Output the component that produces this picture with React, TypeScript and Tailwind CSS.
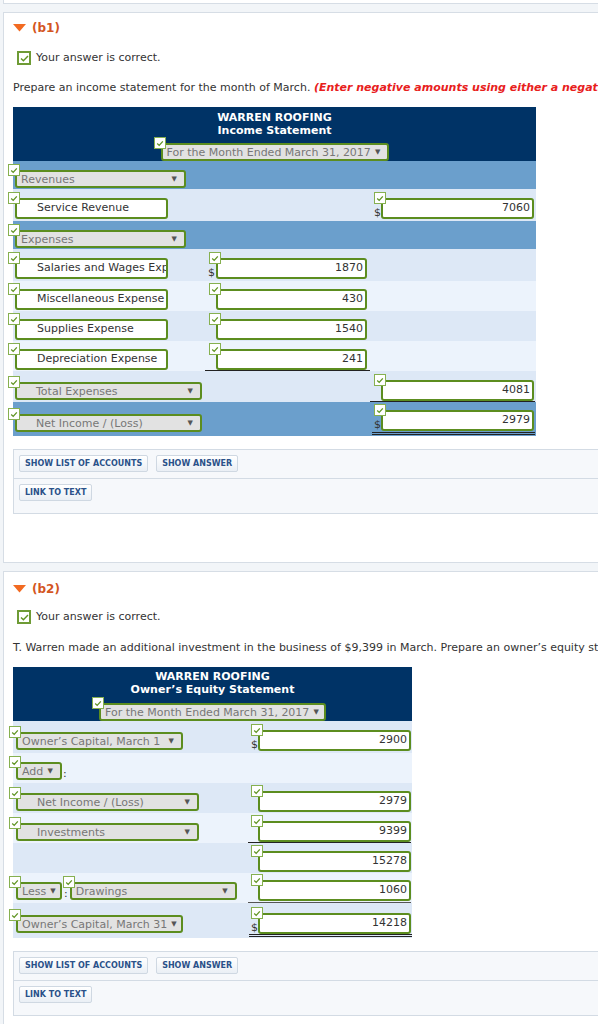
import React from "react";

function Chk() {
  return (
    <span className="absolute left-[-7px] top-[-6px] z-10 flex h-[12px] w-[12px] items-center justify-center border border-[#86b050] bg-white">
      <svg width="8" height="7" viewBox="0 0 8 7">
        <path d="M1.2 3.6 L3.2 5.4 L6.8 1.4" fill="none" stroke="#5f9422" strokeWidth="1.3" />
      </svg>
    </span>
  );
}

function BigChk() {
  return (
    <span className="flex h-[14px] w-[14px] items-center justify-center border-2 border-[#6e9b35] bg-white">
      <svg width="9" height="7" viewBox="0 0 9 7">
        <path d="M1 3.5 L3.4 5.8 L8 1" fill="none" stroke="#5f9422" strokeWidth="1.4" />
      </svg>
    </span>
  );
}

function TextBox({ w, children, right }: { w: string; children: React.ReactNode; right?: boolean }) {
  return (
    <div className={`relative shrink-0 ${w}`}>
      <Chk />
      <div
        className={`flex h-[21px] items-center overflow-hidden whitespace-nowrap rounded-[3px] border-2 border-[#5c8d1f] bg-white text-[11px] font-normal text-[#333] ${
          right ? "justify-end pr-[2px]" : "pl-[20px]"
        }`}
      >
        {children}
      </div>
    </div>
  );
}

function Select({ w, label, pl }: { w: string; label: string; pl: string }) {
  return (
    <div className={`relative shrink-0 ${w}`}>
      <Chk />
      <div
        className={`flex h-[18px] items-center justify-between gap-[4px] overflow-hidden whitespace-nowrap rounded-[3px] border-2 border-[#5c8d1f] bg-[#e2e2e2] ${pl} pr-[7px] text-[11px] font-normal leading-none text-[#777]`}
      >
        <span>{label}</span>
        <span className="text-[7px] text-[#555]">▼</span>
      </div>
    </div>
  );
}

function Dollar({ show, w }: { show?: boolean; w: string }) {
  return (
    <span className={`shrink-0 ${w} text-[11px] leading-[13px] text-[#333]`}>{show ? "$" : ""}</span>
  );
}

function Btn({ children }: { children: React.ReactNode }) {
  return (
    <span className="inline-flex h-[17px] items-center rounded-[2px] border border-[#cfd8e2] bg-gradient-to-b from-white to-[#eaeff5] px-[5px] text-[8px] font-bold text-[#2a5189]">
      {children}
    </span>
  );
}

function ButtonsBox() {
  return (
    <div className="w-[620px] border border-[#d3dbe4] bg-[#f6f8fb]">
      <div className="flex h-[28px] gap-[8px] pl-[5px] pt-[5px]">
        <Btn>SHOW LIST OF ACCOUNTS</Btn>
        <Btn>SHOW ANSWER</Btn>
      </div>
      <div className="h-px bg-[#d3dbe4]" />
      <div className="flex h-[34px] pl-[5px] pt-[5px]">
        <Btn>LINK TO TEXT</Btn>
      </div>
    </div>
  );
}

function Heading({ label }: { label: string }) {
  return (
    <div className="flex h-[16px] items-center">
      <svg width="13" height="8" viewBox="0 0 13 8" className="shrink-0">
        <path d="M0 0 H13 L6.5 7.5 Z" fill="#f26a21" />
      </svg>
      <span className="ml-[6px] text-[12px] font-bold text-[#d4561f]">{label}</span>
    </div>
  );
}

function Correct() {
  return (
    <div className="flex h-[16px] items-center pl-[4px]">
      <BigChk />
      <span className="ml-[5px] text-[11px] text-[#333]">Your answer is correct.</span>
    </div>
  );
}

const LIGHT = "bg-[#dde8f6]";
const LIGHTER = "bg-[#ecf3fc]";
const MID = "bg-[#6b9fcc]";

function IncomeStatement() {
  const cols = "grid grid-cols-[192px_165px_166px]";
  return (
    <div className="w-[523px]">
      <div className="flex h-[54px] flex-col items-center bg-[#003366] pt-[4px] text-[11px] leading-[13px] text-white">
        <div className="font-bold">WARREN ROOFING</div>
        <div className="font-bold">Income Statement</div>
        <div className="mt-[6px]">
          <Select w="w-[228px]" label="For the Month Ended March 31, 2017" pl="pl-[4px]" />
        </div>
      </div>
      {/* Revenues */}
      <div className={`${cols} h-[28px] ${MID}`}>
        <div className="flex items-end pb-[1px] pl-[2px]">
          <Select w="w-[171px]" label="Revenues" pl="pl-[4px]" />
        </div>
      </div>
      {/* Service revenue */}
      <div className={`${cols} h-[32px] ${LIGHT}`}>
        <div className="flex items-end pb-[2px] pl-[2px]">
          <TextBox w="w-[153px]">Service Revenue</TextBox>
        </div>
        <div />
        <div className="flex items-end pb-[2px] pl-[4px]">
          <Dollar show w="w-[7px]" />
          <TextBox w="w-[153px]" right>
            7060
          </TextBox>
        </div>
      </div>
      {/* Expenses */}
      <div className={`${cols} h-[28px] ${MID}`}>
        <div className="flex items-end pb-[1px] pl-[2px]">
          <Select w="w-[171px]" label="Expenses" pl="pl-[4px]" />
        </div>
      </div>
      {[
        { name: "Salaries and Wages Expense", v: "1870", bg: LIGHT, h: "h-[32px]", pb: "pb-[2px]", d: true, line: false },
        { name: "Miscellaneous Expense", v: "430", bg: LIGHTER, h: "h-[30px]", pb: "pb-[1px]", d: false, line: false },
        { name: "Supplies Expense", v: "1540", bg: LIGHT, h: "h-[30px]", pb: "pb-[1px]", d: false, line: false },
        { name: "Depreciation Expense", v: "241", bg: LIGHTER, h: "h-[30px]", pb: "pb-[1px]", d: false, line: true },
      ].map((r) => (
        <div key={r.name} className={`${cols} ${r.h} ${r.bg}`}>
          <div className={`flex items-end ${r.pb} pl-[2px]`}>
            <TextBox w="w-[153px]">{r.name}</TextBox>
          </div>
          <div
            className={`flex items-end pl-[3px] ${r.line ? "border-b border-[#222] pb-0" : r.pb}`}
          >
            <Dollar show={r.d} w="w-[8px]" />
            <TextBox w="w-[151px]" right>
              {r.v}
            </TextBox>
          </div>
          <div />
        </div>
      ))}
      {/* Total expenses */}
      <div className={`${cols} h-[31px] ${LIGHT}`}>
        <div className="col-span-2 flex items-end pb-[2px] pl-[2px]">
          <Select w="w-[187px]" label="Total Expenses" pl="pl-[19px]" />
        </div>
        <div className="flex items-end">
          <div className="flex items-end border-b border-[#222] pl-[4px] pr-[1px]">
            <Dollar w="w-[7px]" />
            <TextBox w="w-[153px]" right>
              4081
            </TextBox>
          </div>
        </div>
      </div>
      {/* Net income */}
      <div className={`${cols} h-[34px] ${MID}`}>
        <div className="col-span-2 flex items-end pb-[4px] pl-[2px]">
          <Select w="w-[187px]" label="Net Income / (Loss)" pl="pl-[19px]" />
        </div>
        <div className="flex items-end pb-[1px] pl-[2px]">
          <div className="flex items-end border-b-[3px] border-double border-[#222] pb-[1px] pl-[2px] pr-[1px]">
            <Dollar show w="w-[7px]" />
            <TextBox w="w-[153px]" right>
              2979
            </TextBox>
          </div>
        </div>
      </div>
    </div>
  );
}

function EquityStatement() {
  const cols = "grid grid-cols-[232px_167px]";
  return (
    <div className="w-[399px]">
      <div className="flex h-[54px] flex-col items-center bg-[#003366] pt-[3px] text-[11px] leading-[13px] text-white">
        <div className="font-bold">WARREN ROOFING</div>
        <div className="font-bold">Owner’s Equity Statement</div>
        <div className="mt-[7px]">
          <Select w="w-[227px]" label="For the Month Ended March 31, 2017" pl="pl-[4px]" />
        </div>
      </div>
      {/* Cap March 1 */}
      <div className={`${cols} h-[32px] ${LIGHT}`}>
        <div className="flex items-end pb-[3px] pl-[3px]">
          <Select w="w-[167px]" label="Owner’s Capital, March 1" pl="pl-[4px]" />
        </div>
        <div className="flex items-end pb-[2px] pl-[6px]">
          <Dollar show w="w-[7px]" />
          <TextBox w="w-[153px]" right>
            2900
          </TextBox>
        </div>
      </div>
      {/* Add */}
      <div className={`${cols} h-[30px] ${LIGHTER}`}>
        <div className="flex items-end pb-[3px] pl-[3px]">
          <Select w="w-[46px]" label="Add" pl="pl-[4px]" />
          <span className="ml-[1px] text-[11px] leading-[12px] text-[#333]">:</span>
        </div>
      </div>
      {/* Net income */}
      <div className={`${cols} h-[30px] ${LIGHT}`}>
        <div className="flex items-end pb-[2px] pl-[3px]">
          <Select w="w-[183px]" label="Net Income / (Loss)" pl="pl-[19px]" />
        </div>
        <div className="flex items-end pb-[1px] pl-[6px]">
          <Dollar w="w-[7px]" />
          <TextBox w="w-[153px]" right>
            2979
          </TextBox>
        </div>
      </div>
      {/* Investments */}
      <div className={`${cols} h-[30px] ${LIGHTER}`}>
        <div className="flex items-end pb-[2px] pl-[3px]">
          <Select w="w-[183px]" label="Investments" pl="pl-[19px]" />
        </div>
        <div className="flex items-end pl-[3px]">
          <div className="flex items-end border-b border-[#222] pl-[3px]">
            <Dollar w="w-[7px]" />
            <TextBox w="w-[153px]" right>
              9399
            </TextBox>
          </div>
        </div>
      </div>
      {/* Total */}
      <div className={`${cols} h-[30px] ${LIGHT}`}>
        <div />
        <div className="flex items-end pb-[1px] pl-[6px]">
          <Dollar w="w-[7px]" />
          <TextBox w="w-[153px]" right>
            15278
          </TextBox>
        </div>
      </div>
      {/* Less drawings */}
      <div className={`${cols} h-[30px] ${LIGHTER}`}>
        <div className="flex items-end pb-[3px] pl-[3px]">
          <Select w="w-[46px]" label="Less" pl="pl-[4px]" />
          <span className="ml-[2px] mr-[2px] text-[11px] leading-[12px] text-[#333]">:</span>
          <Select w="w-[167px]" label="Drawings" pl="pl-[4px]" />
        </div>
        <div className="flex items-end pl-[3px]">
          <div className="flex items-end border-b border-[#555] pb-[1px] pl-[3px]">
            <Dollar w="w-[7px]" />
            <TextBox w="w-[153px]" right>
              1060
            </TextBox>
          </div>
        </div>
      </div>
      {/* Cap March 31 */}
      <div className={`${cols} h-[35px] ${LIGHT}`}>
        <div className="flex items-end pb-[5px] pl-[3px]">
          <Select w="w-[167px]" label="Owner’s Capital, March 31" pl="pl-[4px]" />
        </div>
        <div className="flex items-end pb-[1px] pl-[4px]">
          <div className="flex items-end border-b-[3px] border-double border-[#222] pl-[2px] pr-[1px]">
            <Dollar show w="w-[7px]" />
            <TextBox w="w-[153px]" right>
              14218
            </TextBox>
          </div>
        </div>
      </div>
    </div>
  );
}

export default function App() {
  return (
    <div className="h-[1024px] w-[598px] overflow-hidden bg-[#f2f5f8] font-['DejaVu_Sans',Verdana,sans-serif]">
      <div className="ml-[3px] h-[4px] w-[620px] border-b border-l border-[#d6dde5] bg-white" />
      {/* Card 1 */}
      <div className="ml-[3px] mt-[8px] h-[551px] w-[620px] border border-[#d6dde5] bg-white pl-[9px]">
        <div className="mt-[7px]">
          <Heading label="(b1)" />
        </div>
        <div className="mt-[14px]">
          <Correct />
        </div>
        <div className="mt-[14px] h-[16px] whitespace-nowrap text-[11px] leading-[16px] text-[#333]">
          Prepare an income statement for the month of March.{" "}
          <span className="font-bold italic text-[#e8201c]">
            (Enter negative amounts using either a negative sign preceding the number e.g. -45 or parentheses e.g. (45).)
          </span>
        </div>
        <div className="mt-[11px]">
          <IncomeStatement />
        </div>
        <div className="mt-[13px]">
          <ButtonsBox />
        </div>
      </div>
      {/* Card 2 */}
      <div className="ml-[3px] mt-[8px] h-[460px] w-[620px] border border-[#d6dde5] bg-white pl-[9px]">
        <div className="mt-[9px]">
          <Heading label="(b2)" />
        </div>
        <div className="mt-[12px]">
          <Correct />
        </div>
        <div className="mt-[15px] h-[16px] whitespace-nowrap text-[11px] leading-[16px] text-[#333]">
          T. Warren made an additional investment in the business of $9,399 in March. Prepare an owner’s equity statement for the month of March.
        </div>
        <div className="mt-[11px]">
          <EquityStatement />
        </div>
        <div className="mt-[13px]">
          <ButtonsBox />
        </div>
      </div>
    </div>
  );
}
